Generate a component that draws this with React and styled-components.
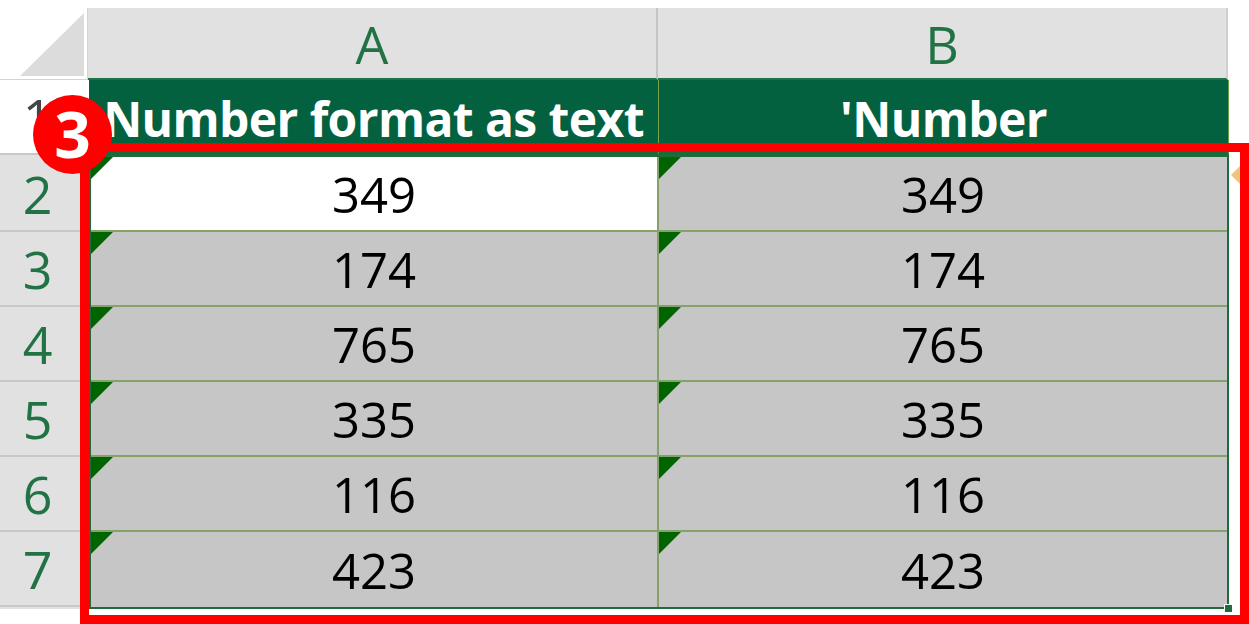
import React from 'react';
import styled, { createGlobalStyle } from 'styled-components';

const GlobalStyle = createGlobalStyle`
  html, body {
    margin: 0;
    padding: 0;
    background: #ffffff;
  }
  body {
    font-family: "Open Sans", "Liberation Sans", sans-serif;
  }
`;

const Page = styled.div`
  position: relative;
  width: 1249px;
  height: 624px;
  padding-top: 8px;
  box-sizing: border-box;
  overflow: hidden;
  background: #ffffff;
`;

const Sheet = styled.div`
  display: flex;
  flex-direction: column;
  width: 1229px;
`;

const Row = styled.div`
  display: flex;
  height: ${p => p.$h}px;
`;

const Corner = styled.div`
  width: 88px;
  border-right: 1px solid #d4d4d4;
  border-bottom: 1px solid #d4d4d4;
  box-sizing: border-box;
  display: flex;
  align-items: flex-end;
  justify-content: flex-end;
  padding: 0 3px 3px 0;
`;

const ColHeader = styled.div`
  width: ${p => p.$w}px;
  box-sizing: border-box;
  background: #e1e1e1;
  color: #217346;
  font-size: 52px;
  line-height: 1;
  display: flex;
  align-items: center;
  justify-content: center;
  border-right: 2px solid ${p => (p.$last ? '#cfcfcf' : '#c4c4c4')};
  border-bottom: 2px solid #217346;
  padding-top: 2px;
`;

const RowHead = styled.div`
  width: 89px;
  height: ${p => p.$h || 75}px;
  box-sizing: border-box;
  background: ${p => (p.$selected ? '#e1e1e1' : '#ffffff')};
  color: ${p => (p.$selected ? '#217346' : '#444444')};
  font-size: 52px;
  line-height: 1;
  display: flex;
  align-items: center;
  justify-content: center;
  padding-right: 14px;
  border-bottom: 2px solid #c8c8c8;
`;

const TitleCell = styled.div`
  width: ${p => p.$w}px;
  box-sizing: border-box;
  background: #03613f;
  color: #ffffff;
  font-weight: 700;
  font-size: 48px;
  letter-spacing: -0.6px;
  line-height: 1;
  display: flex;
  align-items: center;
  justify-content: center;
  padding-top: 6px;
  border-right: 1px solid ${p => (p.$last ? '#66a04a' : '#7aa34f')};
  border-bottom: 3px solid #1b6a3c;
`;

const Body = styled.div`
  display: flex;
`;

const RowHeads = styled.div`
  display: flex;
  flex-direction: column;
  padding-top: 2px;
  background: #e1e1e1;
`;

const Range = styled.div`
  position: relative;
  display: grid;
  grid-template-columns: 568px 568px;
  grid-auto-rows: 75px;
  border: 2px solid #1e6b3c;
  box-shadow: inset 0 0 0 1px #ffffff;
`;

const Cell = styled.div`
  position: relative;
  box-sizing: border-box;
  background: ${p => (p.$active ? '#ffffff' : '#c6c6c6')};
  color: #000000;
  font-size: 49px;
  line-height: 1;
  display: flex;
  align-items: center;
  justify-content: center;
  padding-top: 2px;
  border-right: ${p => (p.$right ? '2px solid #84a26a' : 'none')};
  border-bottom: ${p => (p.$bottom ? '2px solid #84a26a' : 'none')};

  &::before {
    content: '';
    position: absolute;
    top: 0;
    left: 0;
    border-top: 22px solid #006400;
    border-right: 22px solid transparent;
  }
`;

const FillHandle = styled.div`
  position: absolute;
  right: -6px;
  bottom: -6px;
  width: 7px;
  height: 7px;
  background: #1e6b3c;
  border: 1px solid #ffffff;
`;

const ErrorTag = styled.svg`
  position: absolute;
  left: 1231px;
  top: 162px;
`;

const RedFrame = styled.div`
  position: absolute;
  left: 80px;
  top: 143px;
  width: 1169px;
  height: 481px;
  box-sizing: border-box;
  border: 9px solid #ff0000;
  pointer-events: none;
`;

const Badge = styled.div`
  position: absolute;
  left: 33px;
  top: 95px;
  width: 79px;
  height: 79px;
  border-radius: 50%;
  background: #ff0000;
  color: #ffffff;
  font-weight: 700;
  font-size: 64px;
  line-height: 1;
  display: flex;
  align-items: center;
  justify-content: center;
  padding-bottom: 2px;
  box-sizing: border-box;
`;

const values = [349, 174, 765, 335, 116, 423];

export default function App() {
  return (
    <>
      <GlobalStyle />
      <Page>
        <Sheet>
          <Row $h={72}>
            <Corner>
              <svg width="64" height="63" viewBox="0 0 64 63">
                <polygon points="0,63 64,0 64,63" fill="#dcdcdc" />
              </svg>
            </Corner>
            <ColHeader $w={570}>A</ColHeader>
            <ColHeader $w={570} $last>B</ColHeader>
          </Row>
          <Row $h={75}>
            <RowHead $h={75}>1</RowHead>
            <TitleCell $w={570}>Number format as text</TitleCell>
            <TitleCell $w={570} $last>'Number</TitleCell>
          </Row>
          <Body>
            <RowHeads>
              {values.map((v, i) => (
                <RowHead key={i} $selected>{i + 2}</RowHead>
              ))}
            </RowHeads>
            <Range>
              {values.map((v, i) => (
                <React.Fragment key={i}>
                  <Cell $active={i === 0} $right $bottom={i < values.length - 1}>{v}</Cell>
                  <Cell $bottom={i < values.length - 1}>{v}</Cell>
                </React.Fragment>
              ))}
              <FillHandle />
            </Range>
          </Body>
        </Sheet>
        <ErrorTag width="18" height="26" viewBox="0 0 18 26">
          <polygon points="0,13 12,1 18,1 18,25 12,25" fill="#f2c47a" />
        </ErrorTag>
        <RedFrame />
        <Badge>3</Badge>
      </Page>
    </>
  );
}
